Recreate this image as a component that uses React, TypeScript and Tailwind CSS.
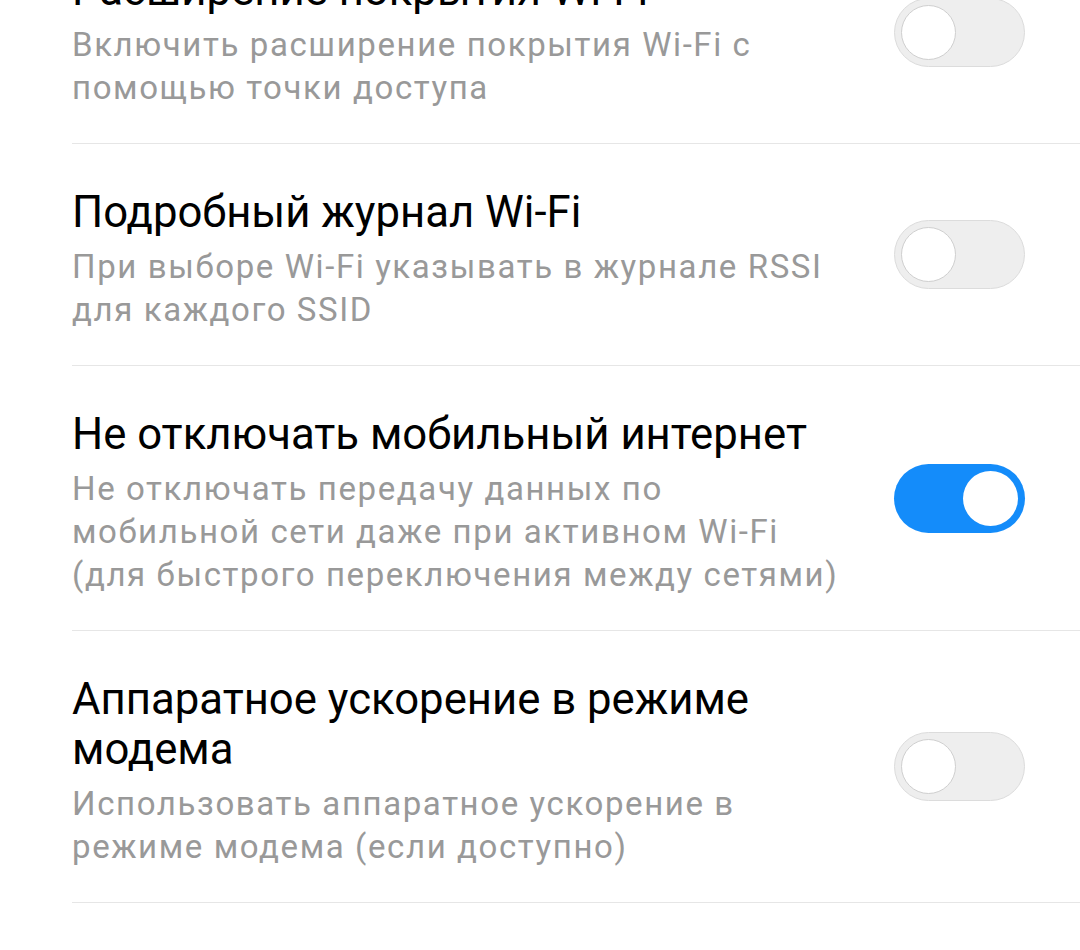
import React, { useState } from "react";

type Item = {
  title: string;
  desc: string;
  on: boolean;
};

const items: Item[] = [
  {
    title: "Расширение покрытия Wi-Fi",
    desc: "Включить расширение покрытия Wi-Fi с помощью точки доступа",
    on: false,
  },
  {
    title: "Подробный журнал Wi-Fi",
    desc: "При выборе Wi-Fi указывать в журнале RSSI для каждого SSID",
    on: false,
  },
  {
    title: "Не отключать мобильный интернет",
    desc: "Не отключать передачу данных по мобильной сети даже при активном Wi-Fi (для быстрого переключения между сетями)",
    on: true,
  },
  {
    title: "Аппаратное ускорение в режиме модема",
    desc: "Использовать аппаратное ускорение в режиме модема (если доступно)",
    on: false,
  },
];

function Toggle({ on, onClick }: { on: boolean; onClick: () => void }) {
  return (
    <button
      onClick={onClick}
      className={
        on
          ? "flex h-[69px] w-[131px] shrink-0 items-center justify-end rounded-full bg-[#148cfa] px-[7px]"
          : "flex h-[69px] w-[131px] shrink-0 items-center justify-start rounded-full border-[1.5px] border-[#dcdcdc] bg-[#eeeeee] px-[6px]"
      }
    >
      <span
        className={
          on
            ? "block h-[55px] w-[55px] rounded-full bg-white"
            : "block h-[55px] w-[55px] rounded-full border border-[#cfcfcf] bg-white"
        }
      />
    </button>
  );
}

function Row({ item, first }: { item: Item; first: boolean }) {
  const [on, setOn] = useState(item.on);
  return (
    <div className={first ? "mt-[-78px] border-b border-[#e6e6e6]" : "border-b border-[#e6e6e6]"}>
      <div className="flex items-center pr-[55px]">
        <div className="mr-[50px] flex-1 pt-[43px] pb-[34px]">
          <div className="text-[43.7px] leading-[50px] text-[#000000]">{item.title}</div>
          <div className="mt-2 text-[33px] leading-[43px] tracking-[1.6px] text-[#999999]">{item.desc}</div>
        </div>
        <Toggle on={on} onClick={() => setOn(!on)} />
      </div>
    </div>
  );
}

export default function App() {
  return (
    <div
      className="h-[950px] w-[1080px] overflow-hidden bg-white"
      style={{ fontFamily: "Roboto, 'Noto Sans', sans-serif" }}
    >
      <div className="ml-[72px]">
        {items.map((item, i) => (
          <Row key={item.title} item={item} first={i === 0} />
        ))}
      </div>
    </div>
  );
}
